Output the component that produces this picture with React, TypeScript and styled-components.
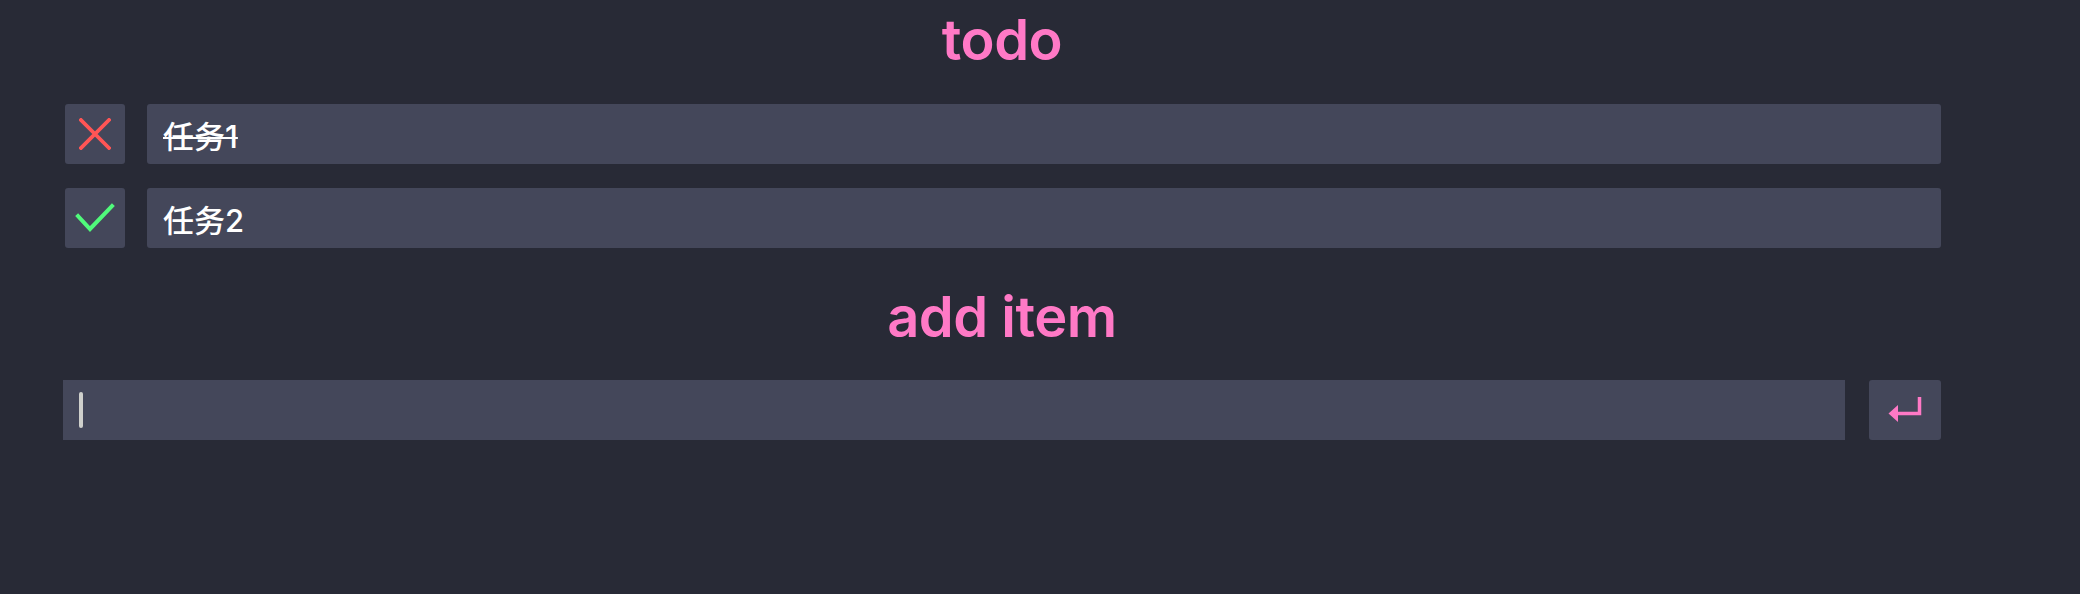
import React, { FC } from "react";
import styled, { createGlobalStyle } from "styled-components";

const GlobalStyle = createGlobalStyle`
  html, body {
    margin: 0;
    padding: 0;
    background: #282a36;
  }
  body {
    font-family: "Inter", "Noto Sans CJK SC", sans-serif;
    color: #f8f8f2;
  }
`;

type TodoType = {
  id: number;
  title: string;
  done: boolean;
};

const todos: TodoType[] = [
  { id: 1, title: "任务1", done: true },
  { id: 2, title: "任务2", done: false },
];

const Page = styled.main`
  width: 1878px;
  margin-left: 63px;
  padding-top: 6px;
  display: flex;
  flex-direction: column;
`;

const Heading = styled.h1<{ $top: number; $bottom: number }>`
  margin: ${(p) => p.$top}px 0 ${(p) => p.$bottom}px;
  font-family: "Inter", sans-serif;
  font-weight: 600;
  font-size: 56px;
  line-height: 68px;
  letter-spacing: -0.5px;
  text-align: center;
  color: #ff79c6;
`;

const List = styled.ul`
  list-style: none;
  margin: 0;
  padding: 0 0 0 2px;
  display: flex;
  flex-direction: column;
  gap: 24px;
`;

const Row = styled.li`
  display: flex;
  gap: 22px;
  height: 60px;
`;

const StatusBox = styled.button`
  width: 60px;
  height: 60px;
  flex: none;
  border: none;
  border-radius: 3px;
  background: #44475a;
  display: flex;
  align-items: center;
  justify-content: center;
  padding: 0;
  cursor: pointer;
`;

const TaskField = styled.div`
  flex: 1;
  display: flex;
  align-items: center;
  padding-left: 16px;
  border-radius: 3px;
  background: #44475a;
`;

const TaskText = styled.span<{ $done: boolean }>`
  font-family: "Inter", "Noto Sans CJK SC", sans-serif;
  font-weight: 500;
  font-size: 31px;
  color: #ffffff;
  text-decoration: ${(p) => (p.$done ? "line-through" : "none")};
  text-decoration-thickness: 2px;
`;

const AddRow = styled.div`
  display: flex;
  gap: 24px;
  height: 60px;
`;

const NewItemField = styled.div`
  flex: 1;
  display: flex;
  align-items: center;
  padding-left: 16px;
  background: #44475a;
`;

const Caret = styled.span`
  width: 4px;
  height: 36px;
  border-radius: 2px;
  background: #cfd0cc;
`;

const EnterButton = styled.button`
  width: 72px;
  flex: none;
  border: none;
  border-radius: 3px;
  background: #44475a;
  display: flex;
  align-items: center;
  justify-content: center;
  padding: 0;
  cursor: pointer;
`;

const CrossIcon: FC = () => (
  <svg width="32" height="32" viewBox="0 0 32 32">
    <path
      d="M2 2 L30 30 M30 2 L2 30"
      stroke="#ff5555"
      strokeWidth="3.8"
      strokeLinecap="square"
      fill="none"
    />
  </svg>
);

const CheckIcon: FC = () => (
  <svg width="40" height="30" viewBox="0 0 40 30">
    <path
      d="M3 13 L15 26 L37 3"
      stroke="#50fa7b"
      strokeWidth="4"
      strokeLinecap="square"
      fill="none"
    />
  </svg>
);

const ReturnIcon: FC = () => (
  <svg width="34" height="28" viewBox="0 0 34 28">
    <path
      d="M31.5 1 V17.5 H9"
      stroke="#ff79c6"
      strokeWidth="3.5"
      fill="none"
    />
    <path d="M0.5 17.5 L10 9 L10 26 Z" fill="#ff79c6" />
  </svg>
);

const App: FC = () => {
  return (
    <>
      <GlobalStyle />
      <Page>
        <Heading $top={0} $bottom={30}>
          todo
        </Heading>
        <List>
          {todos.map((todo) => (
            <Row key={todo.id}>
              <StatusBox>{todo.done ? <CrossIcon /> : <CheckIcon />}</StatusBox>
              <TaskField>
                <TaskText $done={todo.done}>{todo.title}</TaskText>
              </TaskField>
            </Row>
          ))}
        </List>
        <Heading $top={35} $bottom={29}>
          add item
        </Heading>
        <AddRow>
          <NewItemField>
            <Caret />
          </NewItemField>
          <EnterButton>
            <ReturnIcon />
          </EnterButton>
        </AddRow>
      </Page>
    </>
  );
};

export default App;
